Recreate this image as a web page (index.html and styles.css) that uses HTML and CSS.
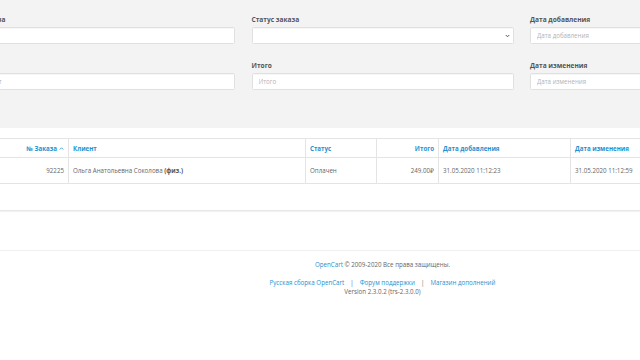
FILE: index.html
```html
<!DOCTYPE html>
<html lang="ru">
<head>
    <meta charset="UTF-8">
    <meta name="viewport" content="width=device-width, initial-scale=1.0">
    <title>Заказы</title>
    <link rel="stylesheet" href="styles.css">
</head>
<body>
    <div class="page">
        <div class="panel">
            <div class="panel-body">
                <div class="well">
                    <div class="filter-row">
                        <div class="filter-col">
                            <div class="form-group">
                                <label>№ Заказа</label>
                                <input type="text" class="form-control">
                            </div>
                            <div class="form-group">
                                <label>Клиент</label>
                                <input type="text" class="form-control" placeholder="Клиент">
                            </div>
                        </div>
                        <div class="filter-col">
                            <div class="form-group">
                                <label>Статус заказа</label>
                                <div class="select-wrap">
                                    <select class="form-control">
                                        <option></option>
                                        <option>Оплачен</option>
                                        <option>Ожидание</option>
                                    </select>
                                    <svg class="select-arrow" width="5" height="4" viewBox="0 0 10 7">
                                        <path d="M1.5 1.5 L5 5 L8.5 1.5" fill="none" stroke="#444" stroke-width="1.8"/>
                                    </svg>
                                </div>
                            </div>
                            <div class="form-group">
                                <label>Итого</label>
                                <input type="text" class="form-control" placeholder="Итого">
                            </div>
                        </div>
                        <div class="filter-col">
                            <div class="form-group">
                                <label>Дата добавления</label>
                                <input type="text" class="form-control" placeholder="Дата добавления">
                            </div>
                            <div class="form-group">
                                <label>Дата изменения</label>
                                <input type="text" class="form-control" placeholder="Дата изменения">
                            </div>
                        </div>
                    </div>
                </div>

                <table class="list">
                    <colgroup>
                        <col class="c-check">
                        <col class="c-id">
                        <col class="c-customer">
                        <col class="c-status">
                        <col class="c-total">
                        <col class="c-date">
                        <col class="c-date">
                        <col class="c-action">
                    </colgroup>
                    <thead>
                        <tr>
                            <th class="center"><input type="checkbox"></th>
                            <th class="right"><a href="#" class="asc">№ Заказа<svg width="5" height="3" viewBox="0 0 10 6"><path d="M1.5 5 L5 1.5 L8.5 5" fill="none" stroke="#1e91cf" stroke-width="1.6"/></svg></a></th>
                            <th><a href="#">Клиент</a></th>
                            <th><a href="#">Статус</a></th>
                            <th class="right"><a href="#">Итого</a></th>
                            <th><a href="#">Дата добавления</a></th>
                            <th><a href="#">Дата изменения</a></th>
                            <th class="right">Действие</th>
                        </tr>
                    </thead>
                    <tbody>
                        <tr>
                            <td class="center"><input type="checkbox"></td>
                            <td class="right">92225</td>
                            <td>Ольга Анатольевна Соколова <b>(физ.)</b></td>
                            <td>Оплачен</td>
                            <td class="right">249.00₽</td>
                            <td>31.05.2020 11:12:23</td>
                            <td>31.05.2020 11:12:59</td>
                            <td class="right"><a href="#" class="btn-edit">✎</a></td>
                        </tr>
                    </tbody>
                </table>
            </div>
        </div>

        <footer class="footer">
            <p><a href="#">OpenCart</a> © 2009-2020 Все права защищены.</p>
            <p><a href="#">Русская сборка OpenCart</a><span class="sep">|</span><a href="#">Форум поддержки</a><span class="sep">|</span><a href="#">Магазин дополнений</a><br>Version 2.3.0.2 (trs-2.3.0.0)</p>
        </footer>
    </div>
</body>
</html>
```

FILE: styles.css
```css
* {
    box-sizing: border-box;
}

html,
body {
    margin: 0;
    padding: 0;
    background: #fff;
    overflow: hidden;
}

body {
    font-family: "Open Sans", "DejaVu Sans", sans-serif;
    font-size: 6.2px;
    line-height: 9px;
    color: #666;
}

a {
    color: #1e91cf;
    text-decoration: none;
}

/* page is scrolled a little to the right */
.page {
    width: 837px;
    margin-left: -36px;
}

.panel {
    border: 1px solid #e8e8e8;
    border-top: 0;
    box-shadow: 0 1px 1px rgba(0, 0, 0, 0.05);
}

.panel-body {
    padding: 0 8px 26px;
}

/* filter */
.well {
    background: #f3f3f3;
    padding: 15px 0 21px;
    margin-bottom: 10px;
}

.filter-row {
    display: grid;
    grid-template-columns: repeat(3, 1fr);
    column-gap: 16.5px;
}

.form-group {
    margin-bottom: 17px;
}

.form-group label {
    display: block;
    font-size: 6.6px;
    font-weight: 700;
    line-height: 9px;
    color: #555;
    margin-bottom: 3px;
}

.form-control {
    display: block;
    width: 100%;
    height: 17px;
    padding: 0 6px;
    font-family: inherit;
    font-size: 6.2px;
    color: #555;
    background: #fff;
    border: 1px solid #e0e0e0;
    border-radius: 1.5px;
    box-shadow: inset 0 0.5px 0.5px rgba(0, 0, 0, 0.075);
    outline: none;
}

.form-control::placeholder {
    color: #b3b3b3;
}

.select-wrap {
    position: relative;
}

.select-wrap select {
    appearance: none;
    -webkit-appearance: none;
}

.select-arrow {
    position: absolute;
    right: 4px;
    top: 7px;
}

/* order list */
.list {
    width: 100%;
    table-layout: fixed;
    border-collapse: collapse;
    border: 1px solid #e4e4e4;
}

.c-check { width: 15px; }
.c-id { width: 80px; }
.c-customer { width: 237px; }
.c-status { width: 71px; }
.c-total { width: 62px; }
.c-date { width: 132px; }
.c-action { width: 90px; }

.list th,
.list td {
    border: 1px solid #e4e4e4;
    padding: 4px 4px;
    text-align: left;
    vertical-align: middle;
    white-space: nowrap;
    overflow: hidden;
}

.list th {
    padding-top: 5px;
    font-weight: 700;
    color: #555;
}

.list td b {
    color: #555;
}

.list .right {
    text-align: right;
}

.list .center {
    text-align: center;
}

.list input[type="checkbox"] {
    width: 6px;
    height: 6px;
    margin: 0;
}

.asc svg {
    margin-left: 2px;
    vertical-align: 1px;
}

.btn-edit {
    display: inline-block;
    width: 17px;
    height: 17px;
    line-height: 17px;
    text-align: center;
    color: #fff;
    background: #1e91cf;
    border-radius: 1.5px;
}

/* footer */
.footer {
    margin-top: 39px;
    border-top: 1px solid #f0f0f0;
    padding-top: 9px;
    text-align: center;
}

.footer p {
    margin: 0 0 9px;
}

.footer .sep {
    margin: 0 6px;
    color: #666;
}
```
